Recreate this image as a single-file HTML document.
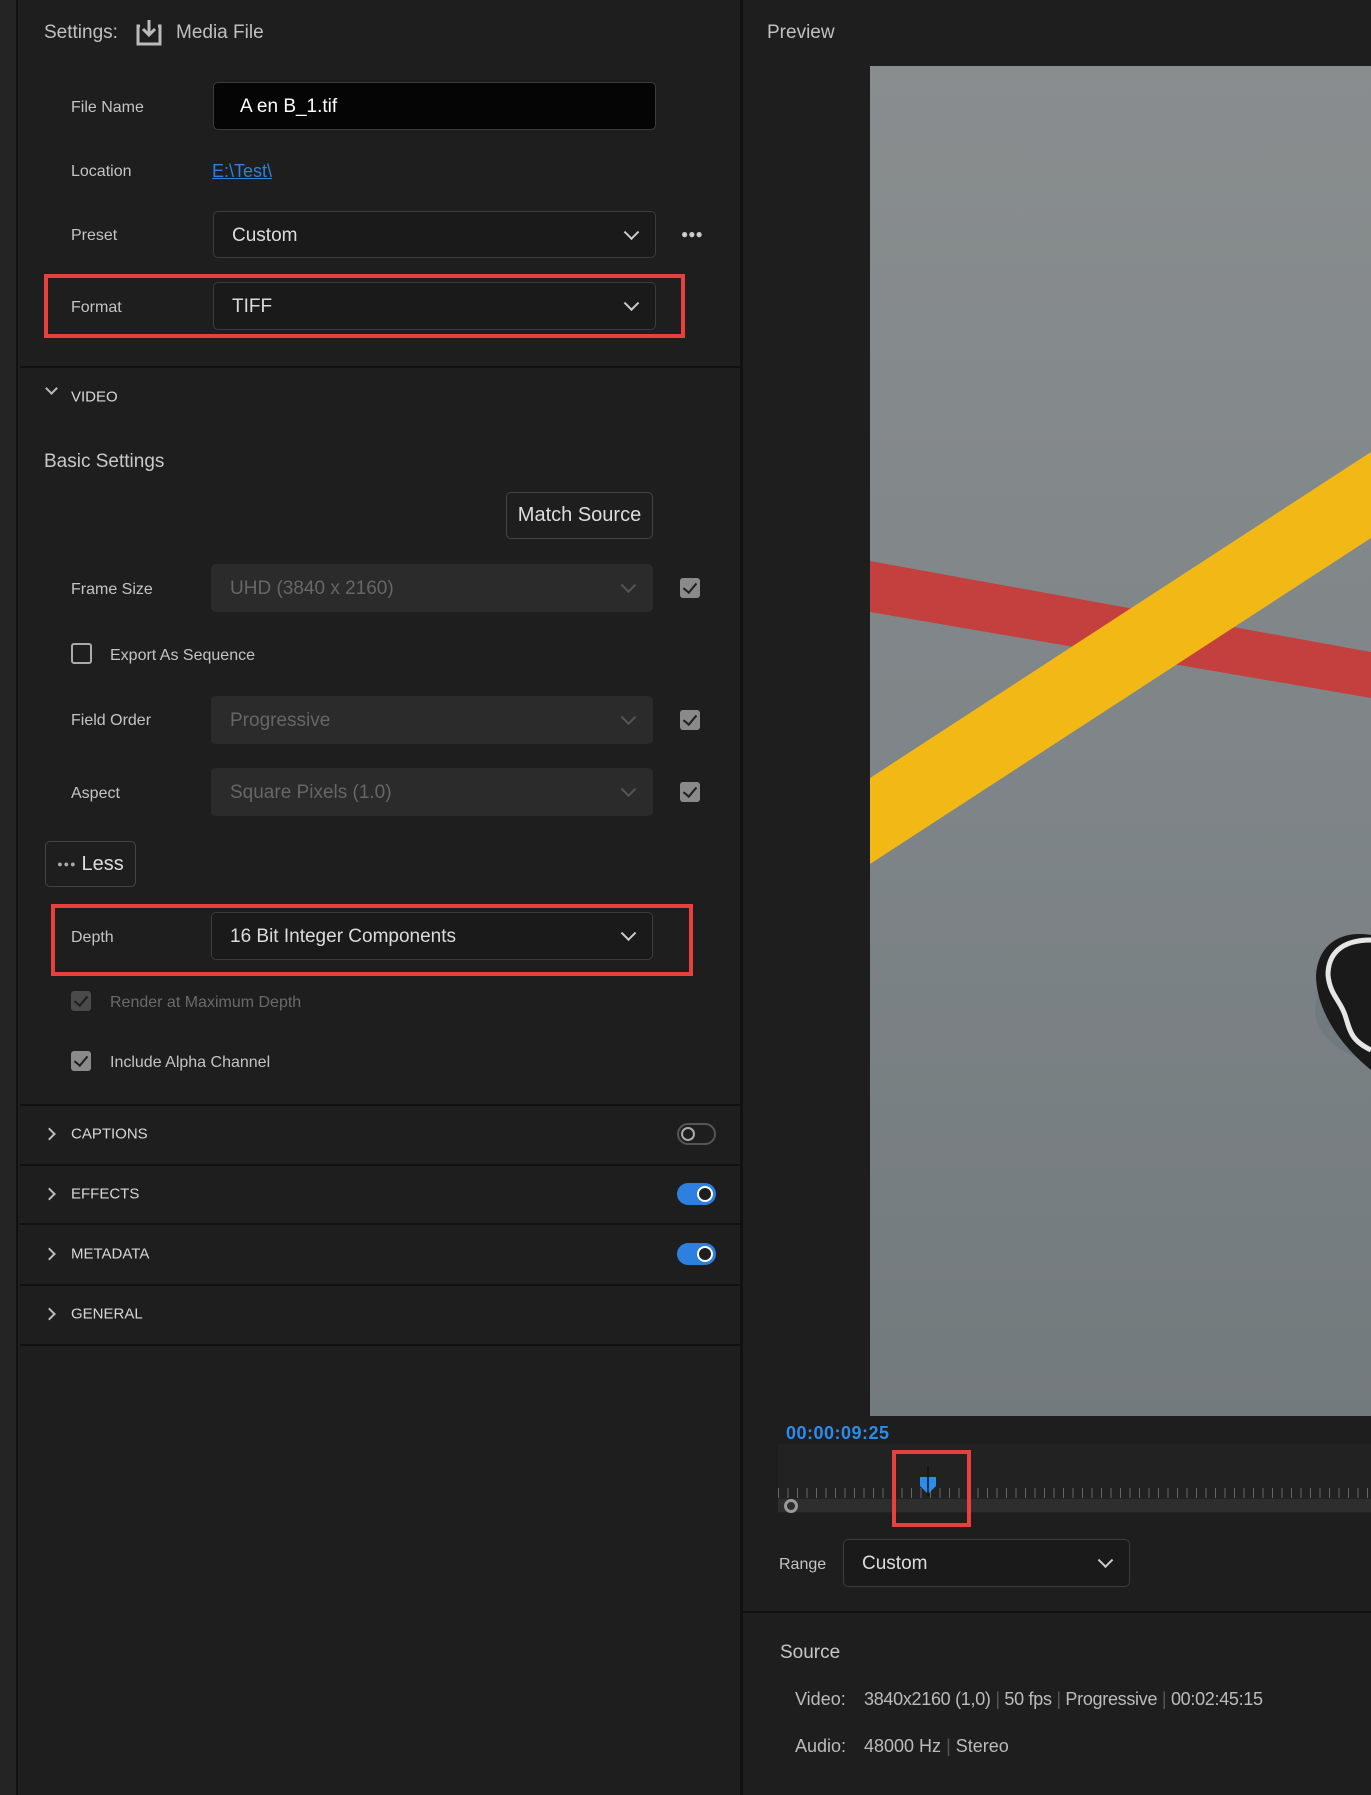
<!DOCTYPE html>
<html><head><meta charset="utf-8"><style>
*{margin:0;padding:0;box-sizing:border-box}
body{width:1371px;height:1795px;background:#1e1e1e;font-family:"Liberation Sans",sans-serif;color:#c8c8c8;position:relative;overflow:hidden}
.a{position:absolute}
.lbl{position:absolute;font-size:16px;color:#c4c4c4;transform:translateY(-50%);margin-top:1px}
.sel{position:absolute;border:1px solid #3c3c3c;border-radius:5px;background:#1a1a1a;font-size:19px;color:#dcdcdc;padding-left:18px;display:flex;align-items:center;padding-top:2px}
.sel.dis{background:#2b2b2b;border-color:#2b2b2b;color:#666}
.chev{position:absolute;right:18px;top:50%;width:11px;height:11px;border-right:2.5px solid #ccc;border-bottom:2.5px solid #ccc;transform:translateY(-75%) rotate(45deg)}
.dis .chev{border-color:#555}
.cb{position:absolute;width:20px;height:20px;border-radius:3px;background:#8a8a8a}
.cb::after{content:"";position:absolute;left:6px;top:2px;width:6px;height:11px;border-right:2.5px solid #1e1e1e;border-bottom:2.5px solid #1e1e1e;transform:rotate(40deg)}
.red{position:absolute;border:4px solid #e8403f}
.hr{position:absolute;height:2px;background:#111}
.sec{position:absolute;left:71px;font-size:15px;color:#d8d8d8;transform:translateY(-50%)}
.rc{position:absolute;left:45px;width:9px;height:9px;border-right:2px solid #bbb;border-bottom:2px solid #bbb;transform:translateY(-50%) rotate(-45deg)}
.tg{position:absolute;left:677px;width:39px;height:22px;border-radius:11px;transform:translateY(-50%)}
</style></head><body>
<div class="a" style="left:0;top:0;width:18px;height:1795px;background:#242424;border-right:2px solid #111"></div>
<div class="a" style="left:740px;top:0;width:3px;height:1795px;background:#111"></div>

<div class="a" style="left:44px;top:22px;font-size:19px;color:#c0c0c0">Settings:</div>
<svg class="a" style="left:136px;top:18px" width="26" height="28" viewBox="0 0 26 28"><path d="M4 8H2v18h22V8h-2M13 2v15M7 11l6 6 6-6" fill="none" stroke="#bbb" stroke-width="3"/></svg>
<div class="a" style="left:176px;top:22px;font-size:19px;color:#c0c0c0">Media File</div>

<div class="lbl" style="left:71px;top:107px">File Name</div>
<div class="sel" style="left:213px;top:82px;width:443px;height:48px;background:#050505;color:#fff;padding-left:26px;font-size:19px">A en B_1.tif</div>
<div class="lbl" style="left:71px;top:171px">Location</div>
<div class="a" style="left:212px;top:161px;font-size:18px;color:#2f7fdc;text-decoration:underline">E:\Test\</div>
<div class="lbl" style="left:71px;top:235px">Preset</div>
<div class="sel" style="left:213px;top:211px;width:443px;height:47px">Custom<div class="chev"></div></div>
<div class="a" style="left:681px;top:227px;font-size:12px;color:#ccc;letter-spacing:0px">●●●</div>
<div class="lbl" style="left:71px;top:307px">Format</div>
<div class="sel" style="left:213px;top:282px;width:443px;height:48px">TIFF<div class="chev"></div></div>
<div class="red" style="left:44px;top:274px;width:641px;height:64px"></div>
<div class="hr" style="left:20px;top:366px;width:720px"></div>

<div class="a" style="left:47px;top:384px;width:9px;height:9px;border-right:2px solid #bbb;border-bottom:2px solid #bbb;transform:rotate(45deg)"></div>
<div class="sec" style="top:397px">VIDEO</div>
<div class="a" style="left:44px;top:451px;font-size:19px;color:#c8c8c8">Basic Settings</div>
<div class="a" style="left:506px;top:492px;width:147px;height:47px;border:1px solid #444;border-radius:5px;font-size:20px;color:#ddd;display:flex;align-items:center;justify-content:center">Match Source</div>

<div class="lbl" style="left:71px;top:589px">Frame Size</div>
<div class="sel dis" style="left:211px;top:564px;width:442px;height:48px">UHD (3840 x 2160)<div class="chev"></div></div>
<div class="cb" style="left:680px;top:578px"></div>
<div class="a" style="left:71px;top:643px;width:21px;height:21px;border:2px solid #aaa;border-radius:3px"></div>
<div class="lbl" style="left:110px;top:655px">Export As Sequence</div>
<div class="lbl" style="left:71px;top:720px">Field Order</div>
<div class="sel dis" style="left:211px;top:696px;width:442px;height:48px">Progressive<div class="chev"></div></div>
<div class="cb" style="left:680px;top:710px"></div>
<div class="lbl" style="left:71px;top:793px">Aspect</div>
<div class="sel dis" style="left:211px;top:768px;width:442px;height:48px">Square Pixels (1.0)<div class="chev"></div></div>
<div class="cb" style="left:680px;top:782px"></div>

<div class="a" style="left:45px;top:841px;width:91px;height:46px;border:1px solid #444;border-radius:5px;font-size:20px;color:#ddd;display:flex;align-items:center;justify-content:center"><span style="font-size:9px;color:#aaa;letter-spacing:1px;margin-right:5px">●●●</span>Less</div>

<div class="lbl" style="left:71px;top:937px">Depth</div>
<div class="sel" style="left:211px;top:912px;width:442px;height:48px">16 Bit Integer Components<div class="chev"></div></div>
<div class="red" style="left:51px;top:904px;width:642px;height:72px"></div>
<div class="cb" style="left:71px;top:991px;background:#4a4a4a"></div>
<div class="lbl" style="left:110px;top:1002px;color:#6a6a6a">Render at Maximum Depth</div>
<div class="cb" style="left:71px;top:1051px"></div>
<div class="lbl" style="left:110px;top:1062px">Include Alpha Channel</div>

<div class="hr" style="left:20px;top:1104px;width:720px"></div>
<div class="rc" style="top:1134px"></div><div class="sec" style="top:1134px">CAPTIONS</div>
<div class="tg" style="top:1134px;border:2px solid #555"><div class="a" style="left:2px;top:2px;width:14px;height:14px;border-radius:50%;border:2px solid #aaa"></div></div>
<div class="hr" style="left:20px;top:1164px;width:720px"></div>
<div class="rc" style="top:1194px"></div><div class="sec" style="top:1194px">EFFECTS</div>
<div class="tg" style="top:1194px;background:#2d7fe0"><div class="a" style="right:3px;top:3px;width:16px;height:16px;border-radius:50%;background:#1e1e1e;border:2px solid #fff"></div></div>
<div class="hr" style="left:20px;top:1223px;width:720px"></div>
<div class="rc" style="top:1254px"></div><div class="sec" style="top:1254px">METADATA</div>
<div class="tg" style="top:1254px;background:#2d7fe0"><div class="a" style="right:3px;top:3px;width:16px;height:16px;border-radius:50%;background:#1e1e1e;border:2px solid #fff"></div></div>
<div class="hr" style="left:20px;top:1284px;width:720px"></div>
<div class="rc" style="top:1314px"></div><div class="sec" style="top:1314px">GENERAL</div>
<div class="hr" style="left:20px;top:1344px;width:720px"></div>

<div class="a" style="left:767px;top:22px;font-size:19px;color:#c0c0c0">Preview</div>
<svg class="a" style="left:870px;top:66px" width="501" height="1350" viewBox="870 66 501 1350">
<defs><linearGradient id="g" x1="0" y1="0" x2="0" y2="1"><stop offset="0" stop-color="#898d8e"/><stop offset=".5" stop-color="#7f8588"/><stop offset="1" stop-color="#737a7d"/></linearGradient></defs>
<rect x="870" y="66" width="501" height="1350" fill="url(#g)"/>
<polygon points="870,561 1371,652 1371,698 870,612" fill="#c4403e"/>
<polygon points="870,778 1371,452 1371,538 870,864" fill="#f2b916"/>
<ellipse cx="1400" cy="1010" rx="85" ry="55" fill="#6a767c" opacity=".6"/>
<path d="M1371,935 C1340,930 1318,945 1316,975 C1316,1010 1340,1045 1371,1070 Z" fill="#1a1a1a"/>
<path d="M1371,1050 C1350,1040 1350,1030 1345,1015 C1340,1000 1330,995 1328,975 C1328,955 1340,940 1371,940" fill="none" stroke="#e6e6e6" stroke-width="5"/>
</svg>

<div class="a" style="left:786px;top:1423px;font-size:18px;font-weight:bold;color:#2d8ceb;letter-spacing:.5px">00:00:09:25</div>
<div class="a" style="left:778px;top:1444px;width:593px;height:69px;background:#222"></div>
<div class="a" style="left:778px;top:1499px;width:593px;height:13px;background:#2e2e2e"></div>
<div class="a" style="left:778px;top:1488px;width:593px;height:10px;background:repeating-linear-gradient(90deg,#666 0 1px,transparent 1px 9.5px)"></div>
<div class="a" style="left:784px;top:1499px;width:14px;height:14px;border-radius:50%;border:3px solid #999"></div>
<svg class="a" style="left:916px;top:1466px" width="24" height="32"><path d="M4 11h16v9l-8 8-8-8z" fill="#2d8ceb"/><line x1="12" y1="0" x2="12" y2="30" stroke="#111" stroke-width="1.5"/></svg>
<div class="red" style="left:892px;top:1450px;width:79px;height:77px"></div>

<div class="lbl" style="left:779px;top:1564px">Range</div>
<div class="sel" style="left:843px;top:1539px;width:287px;height:48px">Custom<div class="chev"></div></div>
<div class="hr" style="left:743px;top:1611px;width:628px"></div>
<div class="a" style="left:780px;top:1642px;font-size:19px;color:#c8c8c8">Source</div>
<div class="a" style="left:795px;top:1689px;font-size:18px;color:#bbb">Video:</div>
<div class="a" style="left:864px;top:1689px;font-size:18px;color:#bbb;letter-spacing:-.3px">3840x2160 (1,0) <span style="color:#555">|</span> 50 fps <span style="color:#555">|</span> Progressive <span style="color:#555">|</span> 00:02:45:15</div>
<div class="a" style="left:795px;top:1736px;font-size:18px;color:#bbb">Audio:</div>
<div class="a" style="left:864px;top:1736px;font-size:18px;color:#bbb">48000 Hz <span style="color:#555">|</span> Stereo</div>
</body></html>
